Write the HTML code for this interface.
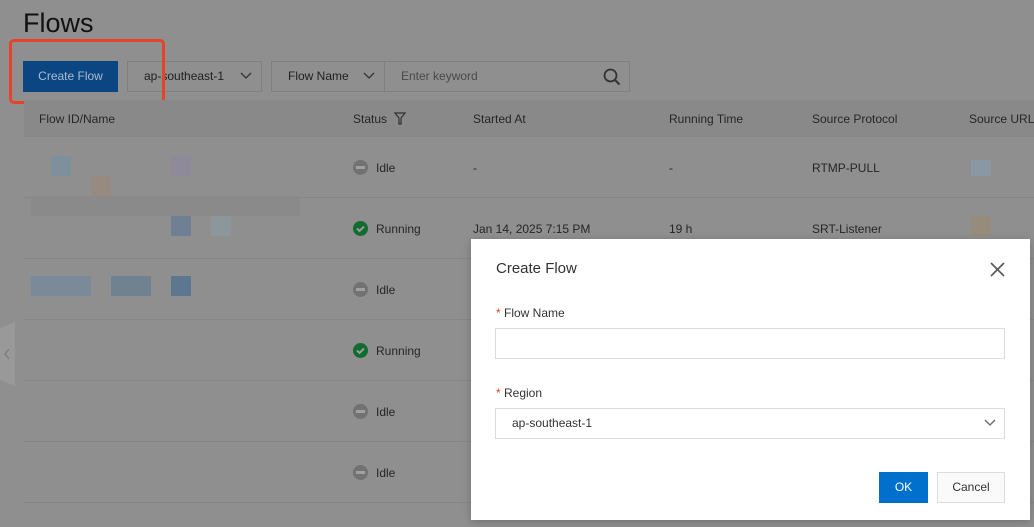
<!DOCTYPE html>
<html><head><style>
*{box-sizing:border-box;margin:0;padding:0}
body{width:1034px;height:527px;overflow:hidden;background:#8f8f8f;font-family:"Liberation Sans",sans-serif;color:#1f1f1f;position:relative;font-size:12px}
.a{position:absolute;white-space:nowrap}
.t{color:#262626}
.sep{position:absolute;left:24px;right:0;height:1px;background:#858585}
.ic{display:inline-block;width:15px;height:15px;border-radius:50%;vertical-align:-3px;margin-right:8px;position:relative}
.idle{background:#727272}
.idle:after{content:"";position:absolute;left:3px;right:3px;top:6px;height:3px;background:#a0a0a0}
.run{background:#126b2f}
.blk{position:absolute;height:20px}
</style></head><body>
<div class="a" style="left:23px;top:8px;font-size:27px;color:#111">Flows</div>
<div class="a" style="left:23px;top:61px;width:95px;height:31px;background:#0b4683;color:#a9bcd0;font-size:12px;line-height:31px;text-align:center">Create Flow</div>
<div class="a" style="left:127px;top:61px;width:135px;height:31px;border:1px solid #7f7f7f;line-height:29px;padding-left:16px;font-size:12px" >ap-southeast-1<svg class="a" style="right:9px;top:10px" width="12" height="8" viewBox="0 0 12 8"><path d="M1 1l5 5 5-5" fill="none" stroke="#333" stroke-width="1.3"/></svg></div>
<div class="a" style="left:271px;top:61px;width:114px;height:31px;border:1px solid #7f7f7f;line-height:29px;padding-left:16px">Flow Name<svg class="a" style="right:9px;top:10px" width="12" height="8" viewBox="0 0 12 8"><path d="M1 1l5 5 5-5" fill="none" stroke="#333" stroke-width="1.3"/></svg></div>
<div class="a" style="left:384px;top:61px;width:246px;height:31px;border:1px solid #7f7f7f;line-height:29px;padding-left:16px;color:#4a4a4a">Enter keyword
<svg class="a" style="right:8px;top:6px" width="18" height="18" viewBox="0 0 18 18"><circle cx="7.5" cy="7.5" r="6" fill="none" stroke="#333" stroke-width="1.8"/><line x1="12" y1="12" x2="16.5" y2="16.5" stroke="#333" stroke-width="2"/></svg></div>
<div class="a" style="left:9px;top:39px;width:156px;height:65px;border:3px solid #e5432b;border-radius:5px"></div>
<div class="a" style="left:24px;top:100px;right:0;height:37px;background:#898989"></div>
<div class="a t" style="left:39px;top:112px">Flow ID/Name</div>
<div class="a t" style="left:353px;top:112px">Status <svg width="12" height="13" viewBox="0 0 12 13" style="vertical-align:-2px;margin-left:4px"><path d="M1 1h10L7 6v6H5V6z" fill="none" stroke="#333" stroke-width="1.2"/></svg></div>
<div class="a t" style="left:473px;top:112px">Started At</div>
<div class="a t" style="left:669px;top:112px">Running Time</div>
<div class="a t" style="left:812px;top:112px">Source Protocol</div>
<div class="a t" style="left:969px;top:112px">Source URL</div>
<div class="sep" style="top:136px"></div>
<div class="sep" style="top:197px"></div>
<div class="sep" style="top:258px"></div>
<div class="sep" style="top:319px"></div>
<div class="sep" style="top:380px"></div>
<div class="sep" style="top:441px"></div>
<div class="sep" style="top:502px"></div>
<div class="a t" style="left:353px;top:160px"><span class="ic idle"></span>Idle</div>
<div class="a t" style="left:353px;top:221px"><span class="ic run"><svg width="15" height="15" viewBox="0 0 15 15" style="position:absolute;left:0;top:0"><path d="M4 7.5l2.5 2.5 4.5-4.5" fill="none" stroke="#9a9a9a" stroke-width="2"/></svg></span>Running</div>
<div class="a t" style="left:353px;top:282px"><span class="ic idle"></span>Idle</div>
<div class="a t" style="left:353px;top:343px"><span class="ic run"><svg width="15" height="15" viewBox="0 0 15 15" style="position:absolute;left:0;top:0"><path d="M4 7.5l2.5 2.5 4.5-4.5" fill="none" stroke="#9a9a9a" stroke-width="2"/></svg></span>Running</div>
<div class="a t" style="left:353px;top:404px"><span class="ic idle"></span>Idle</div>
<div class="a t" style="left:353px;top:465px"><span class="ic idle"></span>Idle</div>
<div class="a t" style="left:473px;top:161px">-</div>
<div class="a t" style="left:669px;top:161px">-</div>
<div class="a t" style="left:812px;top:161px">RTMP-PULL</div>
<div class="a t" style="left:473px;top:222px">Jan 14, 2025 7:15 PM</div>
<div class="a t" style="left:669px;top:222px">19 h</div>
<div class="a t" style="left:812px;top:222px">SRT-Listener</div>
<div class="blk" style="left:51px;top:156px;width:20px;background:#7d909c"></div>
<div class="blk" style="left:171px;top:156px;width:20px;background:#8e8a99"></div>
<div class="blk" style="left:91px;top:176px;width:20px;background:#978b81"></div>
<div class="blk" style="left:31px;top:196px;width:269px;background:#8a8a8a"></div>
<div class="blk" style="left:171px;top:216px;width:20px;background:#6f8094"></div>
<div class="blk" style="left:211px;top:216px;width:20px;background:#8c979c"></div>
<div class="blk" style="left:31px;top:276px;width:60px;background:#7a8a98"></div>
<div class="blk" style="left:111px;top:276px;width:40px;background:#70828f"></div>
<div class="blk" style="left:171px;top:276px;width:20px;background:#5e7790"></div>
<div class="blk" style="left:971px;top:160px;width:20px;height:16px;background:#8a98a6"></div>
<div class="blk" style="left:971px;top:216px;width:20px;background:#978b7c"></div>
<div class="a" style="left:0;top:322px;width:15px;height:64px;background:#999;clip-path:polygon(0 10%,100% 0,100% 100%,0 90%)"></div>
<svg class="a" style="left:3px;top:348px" width="8" height="12" viewBox="0 0 8 12"><path d="M6 1L2 6l4 5" fill="none" stroke="#7a7a7a" stroke-width="1.2"/></svg>
<div class="a" style="left:471px;top:239px;width:559px;height:281px;background:#fff;box-shadow:0 2px 8px rgba(0,0,0,.2)">
<div class="a" style="left:25px;top:21px;font-size:15px;color:#333">Create Flow</div>
<svg class="a" style="left:519px;top:23px" width="15" height="15" viewBox="0 0 15 15"><path d="M1 1L14 14M14 1L1 14" stroke="#555" stroke-width="1.6"/></svg>
<div class="a" style="left:25px;top:67px;color:#333"><span style="color:#e5432b">*</span> Flow Name</div>
<div class="a" style="left:24px;top:89px;width:510px;height:31px;border:1px solid #ddd"></div>
<div class="a" style="left:25px;top:147px;color:#333"><span style="color:#e5432b">*</span> Region</div>
<div class="a" style="left:24px;top:169px;width:510px;height:31px;border:1px solid #ddd;line-height:29px;padding-left:16px;color:#333">ap-southeast-1
<svg class="a" style="right:8px;top:10px" width="12" height="8" viewBox="0 0 12 8"><path d="M1 1l5 5 5-5" fill="none" stroke="#666" stroke-width="1.3"/></svg></div>
<div class="a" style="left:408px;top:233px;width:49px;height:31px;background:#0070cc;color:#fff;text-align:center;line-height:31px">OK</div>
<div class="a" style="left:466px;top:233px;width:68px;height:31px;border:1px solid #ddd;color:#333;text-align:center;line-height:29px;background:#fafafa">Cancel</div>
</div>
</body></html>
